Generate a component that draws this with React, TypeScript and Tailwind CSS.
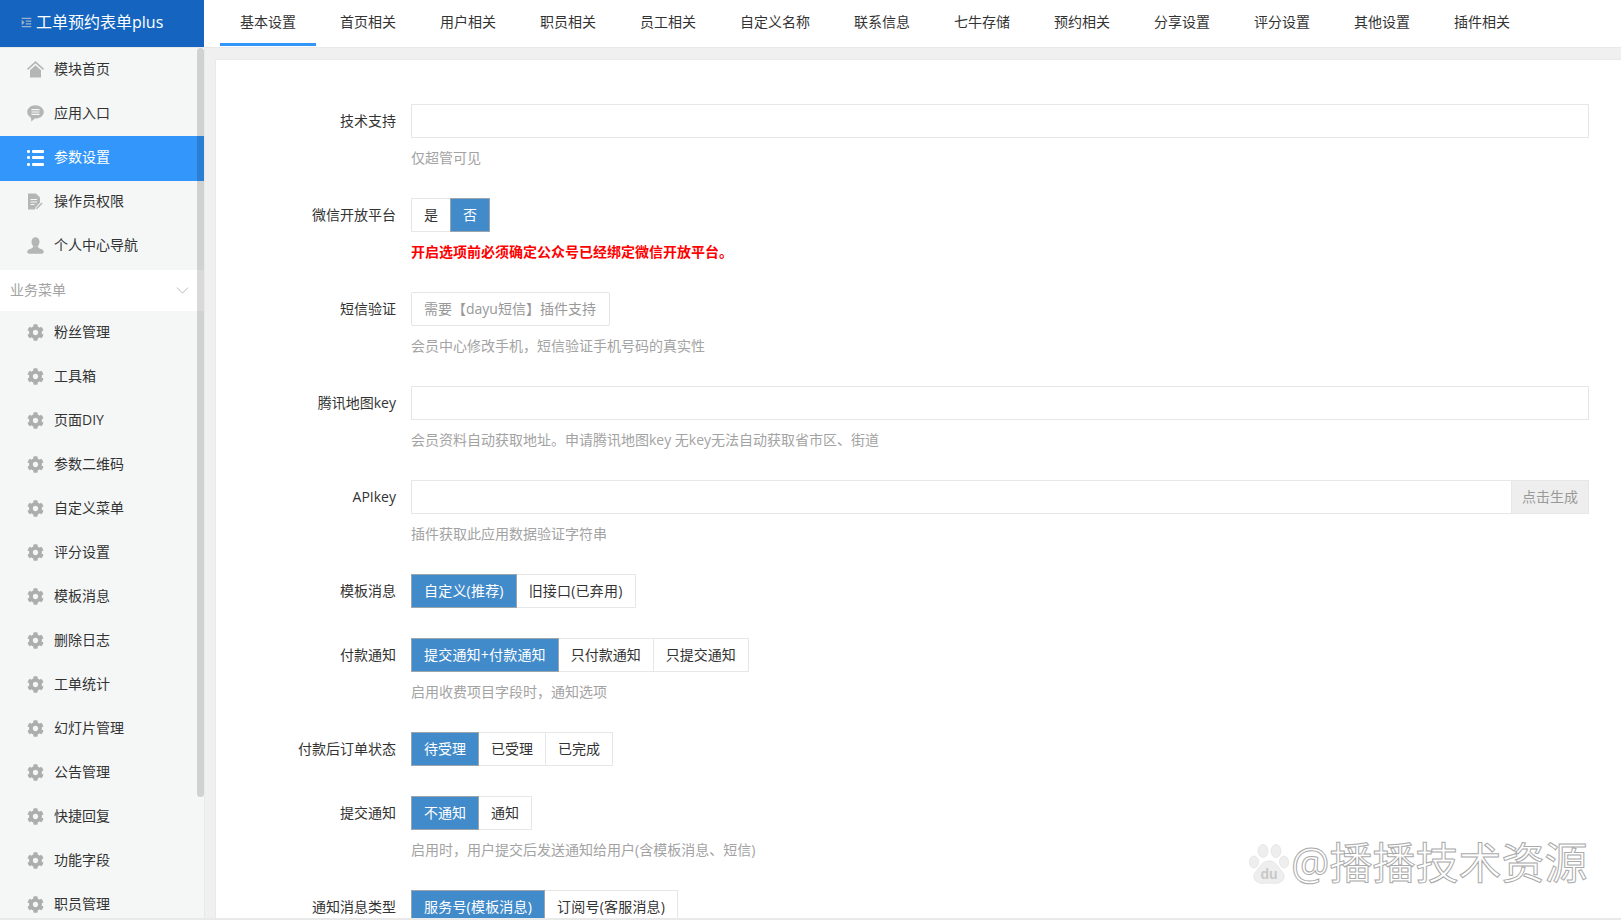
import { FaCog, FaIndent } from 'react-icons/fa';
import { ChevronDown } from 'lucide-react';

const tabs = ['基本设置', '首页相关', '用户相关', '职员相关', '员工相关', '自定义名称', '联系信息', '七牛存储', '预约相关', '分享设置', '评分设置', '其他设置', '插件相关'];
const bizMenu = ['粉丝管理', '工具箱', '页面DIY', '参数二维码', '自定义菜单', '评分设置', '模板消息', '删除日志', '工单统计', '幻灯片管理', '公告管理', '快捷回复', '功能字段', '职员管理'];

function HomeIcon() {
  return (
    <svg viewBox="0 0 17 17" className="w-[17px] h-[17px]" fill="#b5b5b5">
      <path d="M8.5 0 0 7.8l1 1.2L8.5 2.2 16 9l1-1.2z" />
      <path d="M8.5 4.2 3 9.3V16.5h11V9.3z" />
    </svg>
  );
}

function ChatIcon() {
  return (
    <svg viewBox="0 0 17 17" className="w-[17px] h-[17px]">
      <path fill="#b5b5b5" d="M8.5 0.3C4 0.3 0.2 3.2 0.2 7c0 2.4 1.5 4.4 3.6 5.6l0.6 4 3.4-3h0.7c4.5 0 8.3-3 8.3-6.6S13 0.3 8.5 0.3z" />
      <path stroke="#f5f7f7" strokeWidth="1.1" d="M4.5 4.6h8M4.5 7h8M4.5 9.4h8" />
    </svg>
  );
}

function ListIcon() {
  return (
    <svg viewBox="0 0 17 17" className="w-[17px] h-[17px]" fill="#fff">
      <rect x="0" y="1" width="3" height="3" rx="1.2" />
      <rect x="5" y="1" width="12" height="3" rx="1" />
      <rect x="0" y="7" width="3" height="3" rx="1.2" />
      <rect x="5" y="7" width="12" height="3" rx="1" />
      <rect x="0" y="14" width="3" height="3" rx="1.2" />
      <rect x="5" y="14" width="12" height="3" rx="1" />
    </svg>
  );
}

function FileIcon() {
  return (
    <svg viewBox="0 0 17 17" className="w-[17px] h-[17px]">
      <path fill="#b5b5b5" d="M1 0.5h8l4 4v5l-4.5 5-0.5 2H1z" />
      <path stroke="#f5f7f7" strokeWidth="1.1" d="M3.5 6.5h6.5M3.5 9h6.5M3.5 11.5h4" />
      <path stroke="#b5b5b5" strokeWidth="1.5" d="M9.5 15.8l5.5-5.8" />
    </svg>
  );
}

function PersonIcon() {
  return (
    <svg viewBox="0 0 17 17" className="w-[17px] h-[17px]" fill="#b5b5b5">
      <ellipse cx="8.5" cy="5" rx="4" ry="4.8" />
      <path d="M6 9.2c0 1.5-1 2.2-3 2.8C1 12.6 0.2 13.5 0.2 15c0 1.2 1.2 1.8 3 1.8h10.6c1.8 0 3-0.6 3-1.8 0-1.5-0.8-2.4-2.8-3-2-0.6-3-1.3-3-2.8z" />
    </svg>
  );
}

function NavItem({ icon, label, active }: { icon: React.ReactNode; label: string; active?: boolean }) {
  return (
    <div className={active ? 'h-[45px] -mb-px pb-[3px] flex items-center bg-[#3296fa] text-white' : 'h-11 pb-[2px] flex items-center text-[#333]'}>
      <span className="w-[54px] pl-[27px] shrink-0 flex items-center">{icon}</span>
      <span>{label}</span>
    </div>
  );
}

function Choice({ options, selected = 0 }: { options: string[]; selected?: number }) {
  return (
    <div className="flex">
      {options.map((o, i) => (
        <div
          key={o}
          className={
            (i > 0 ? '-ml-px ' : '') +
            (o.includes('(') || o.includes('+') ? 'tracking-[0.2px] ' : '') +
            'h-[34px] px-3 flex items-center border whitespace-nowrap ' +
            (i === selected ? 'relative bg-[#428bca] border-[#9aa5ae] text-white' : 'bg-white border-[#e7e7e7] text-[#333]')
          }
        >
          {o}
        </div>
      ))}
    </div>
  );
}

function Help({ children, red }: { children: React.ReactNode; red?: boolean }) {
  return (
    <p className={'mt-[10px] h-5 leading-5 ' + (red ? 'text-[#f00] font-bold' : 'text-[#a3a3a3]')}>{children}</p>
  );
}

function Row({ label, children }: { label: string; children: React.ReactNode }) {
  return (
    <div className="flex mb-[30px]">
      <label className="w-[180px] pr-[15px] h-[34px] leading-[34px] text-right text-[#333] shrink-0">{label}</label>
      <div className="flex-1 min-w-0">{children}</div>
    </div>
  );
}

function TextBox() {
  return <div className="h-[34px] bg-white border border-[#e7e7e7]" />;
}

export default function App() {
  return (
    <div className="w-[1621px] h-[920px] overflow-hidden bg-white text-sm relative font-['Open_Sans','Noto_Sans_CJK_SC',sans-serif]">
      <div className="h-[918px] flex flex-col overflow-hidden">
        {/* top bar */}
        <header className="h-[47px] flex shrink-0 bg-white">
          <div className="w-[204px] shrink-0 bg-[#1565c0] flex items-center pl-[21px] text-white">
            <FaIndent className="w-[11px] h-[11px] text-[#9fb2c9] mr-[4px] mb-[3px]" />
            <span className="text-base pb-[3px]">工单预约表单plus</span>
          </div>
          <nav className="flex pl-4 gap-1">
            {tabs.map((t, i) => (
              <div
                key={t}
                className={'h-[46px] px-5 flex items-center whitespace-nowrap text-[#333] border-b-[3px] pt-px ' + (i === 0 ? 'border-[#3296fa]' : 'border-transparent')}
              >
                {t}
              </div>
            ))}
          </nav>
        </header>

        <div className="flex-1 flex min-h-0">
          {/* sidebar */}
          <aside className="w-[205px] shrink-0 bg-[#f5f7f7] border-r border-[#e9e9e9] border-t border-t-[#e9e9e9] relative overflow-hidden">
            <NavItem icon={<HomeIcon />} label="模块首页" />
            <NavItem icon={<ChatIcon />} label="应用入口" />
            <NavItem icon={<ListIcon />} label="参数设置" active />
            <NavItem icon={<FileIcon />} label="操作员权限" />
            <NavItem icon={<PersonIcon />} label="个人中心导航" />
            <div className="mt-[2px] h-[41px] pb-px bg-white flex items-center justify-between pl-[10px] pr-[11px] text-[#a3a3a3]">
              <span>业务菜单</span>
              <ChevronDown className="w-[21px] h-[21px] text-[#b0b0b0]" strokeWidth={1} />
            </div>
            {bizMenu.map((m) => (
              <NavItem key={m} icon={<FaCog className="w-[17px] h-[17px] text-[#adadad]" />} label={m} />
            ))}
            <div className="absolute top-0 left-[197px] w-[7px] h-[749px] rounded-[4px] bg-black/15" />
          </aside>

          {/* main */}
          <main className="flex-1 min-w-0 bg-[#f0f0f0] border-t border-[#e9e9e9] pt-[11px] pl-[10px]">
            <div className="h-full bg-white border-t border-l border-[#e9e9e9] pt-[44px] pl-[15px] pr-[32px] overflow-hidden">
              <Row label="技术支持">
                <TextBox />
                <Help>仅超管可见</Help>
              </Row>
              <Row label="微信开放平台">
                <Choice options={['是', '否']} selected={1} />
                <Help red>开启选项前必须确定公众号已经绑定微信开放平台。</Help>
              </Row>
              <Row label="短信验证">
                <div className="w-[199px] h-[34px] px-3 flex items-center border border-[#e5e5e5] rounded-[2px] text-[#999] whitespace-nowrap">需要【dayu短信】插件支持</div>
                <Help>会员中心修改手机，短信验证手机号码的真实性</Help>
              </Row>
              <Row label="腾讯地图key">
                <TextBox />
                <Help>会员资料自动获取地址。申请腾讯地图key 无key无法自动获取省市区、街道</Help>
              </Row>
              <Row label="APIkey">
                <div className="flex h-[34px]">
                  <div className="flex-1 border border-[#e7e7e7]" />
                  <div className="w-[78px] -ml-px flex items-center justify-center bg-[#eee] border border-[#e7e7e7] text-[#999]">点击生成</div>
                </div>
                <Help>插件获取此应用数据验证字符串</Help>
              </Row>
              <Row label="模板消息">
                <Choice options={['自定义(推荐)', '旧接口(已弃用)']} />
              </Row>
              <Row label="付款通知">
                <Choice options={['提交通知+付款通知', '只付款通知', '只提交通知']} />
                <Help>启用收费项目字段时，通知选项</Help>
              </Row>
              <Row label="付款后订单状态">
                <Choice options={['待受理', '已受理', '已完成']} />
              </Row>
              <Row label="提交通知">
                <Choice options={['不通知', '通知']} />
                <Help>启用时，用户提交后发送通知给用户(含模板消息、短信)</Help>
              </Row>
              <Row label="通知消息类型">
                <Choice options={['服务号(模板消息)', '订阅号(客服消息)']} />
              </Row>
            </div>
          </main>
        </div>
      </div>

      {/* bottom edge of the capture */}
      <div className="h-[2px] bg-[#e9e9e9]" />

      {/* watermark */}
      <div className="absolute left-[1249px] top-[839px] flex items-center pointer-events-none">
        <svg viewBox="0 0 40 42" className="w-[40px] h-[42px] mr-[2px] mt-1">
          <g fill="#eeeeee" stroke="#dddddd" strokeWidth="0.6">
            <ellipse cx="5" cy="19" rx="4.6" ry="6" />
            <ellipse cx="14" cy="8" rx="5" ry="6.5" />
            <ellipse cx="27" cy="8" rx="5" ry="6.5" />
            <ellipse cx="35" cy="19" rx="4.6" ry="6" />
            <path d="M20 18c-6 0-8 4-11 8-3 3-6 7-3 11 2 3 6 4 14 3 8 1 12 0 14-3 3-4 0-8-3-11-3-4-5-8-11-8z" />
          </g>
          <text x="20" y="36" textAnchor="middle" fontSize="14" fontWeight="700" fill="#c8c8c8" fontFamily="Liberation Sans, sans-serif">du</text>
        </svg>
        <span className="text-[43px] leading-none text-white whitespace-nowrap [-webkit-text-stroke:1px_#aaaaaa]">@播播技术资源</span>
      </div>
    </div>
  );
}
